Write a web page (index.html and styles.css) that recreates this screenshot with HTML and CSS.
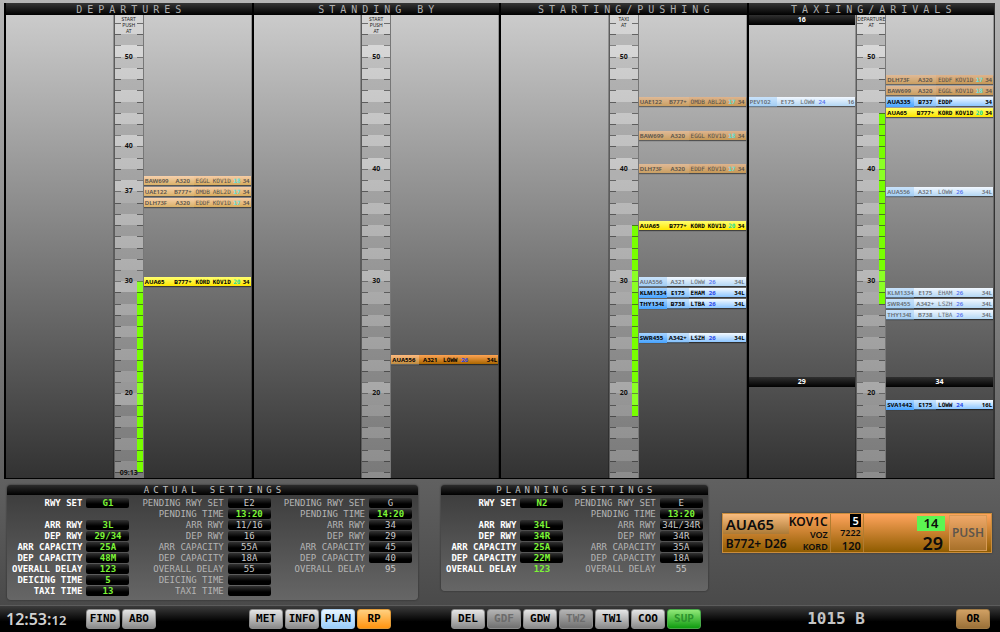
FILE: index.html
```html
<!DOCTYPE html>
<html lang="en">
<head>
<meta charset="utf-8">
<title>Departure Manager</title>
<link rel="stylesheet" href="styles.css">
</head>
<body>
<main class="board" id="board"></main>

<div class="lower">
  <section class="settings">
    <h2 class="settings-title">ACTUAL SETTINGS</h2>
    <div class="settings-cols" id="actual"></div>
  </section>
  <section class="settings planning">
    <h2 class="settings-title">PLANNING SETTINGS</h2>
    <div class="settings-cols" id="planning"></div>
  </section>
  <article class="card">
    <div class="card-id">
      <div class="card-call">AUA65</div>
      <div class="card-type"><span>B772+</span><span>D26</span></div>
    </div>
    <div class="card-route"><b>KOV1C</b><span>VOZ</span><span>KORD</span></div>
    <div class="card-codes"><b class="flag">5</b><span>7222</span><b>120</b></div>
    <div class="card-slot"><span class="slot-min">14</span><span class="slot-rwy">29</span></div>
    <button class="push" type="button">PUSH</button>
  </article>
</div>

<footer class="bar">
  <time class="clock">12:53:<small>12</small></time>
  <div class="group group-find">
    <button class="key" type="button">FIND</button>
    <button class="key" type="button">ABO</button>
  </div>
  <div class="group group-view">
    <button class="key" type="button">MET</button>
    <button class="key" type="button">INFO</button>
    <button class="key key-blue" type="button">PLAN</button>
    <button class="key key-amber" type="button">RP</button>
  </div>
  <div class="group group-role">
    <button class="key" type="button">DEL</button>
    <button class="key key-off" type="button">GDF</button>
    <button class="key" type="button">GDW</button>
    <button class="key key-off" type="button">TW2</button>
    <button class="key" type="button">TW1</button>
    <button class="key" type="button">COO</button>
    <button class="key key-green" type="button">SUP</button>
  </div>
  <div class="qnh">1015 B</div>
  <button class="key key-brown" type="button">OR</button>
</footer>
<script src="app.js"></script>
</body>
</html>
```

FILE: styles.css
```css
* { box-sizing: border-box; }

:root {
  --mono: "DejaVu Sans Mono", "Liberation Mono", monospace;
  --sans: "Noto Sans", "Open Sans", sans-serif;
}

body {
  margin: 0;
  min-height: 100vh;
  display: flex;
  flex-direction: column;
  font-family: var(--mono);
  background: linear-gradient(#b6b6b6, #454545);
}

/* Board */
.board {
  flex: 1;
  display: grid;
  grid-template-columns: repeat(4, minmax(0, 1fr));
  margin: 3px 5px 0 4px;
  border-right: 1px solid #333;
  border-bottom: 1px solid #000;
}

.stage {
  display: flex;
  flex-direction: column;
  border-left: 2px solid #000;
}

.stage-title {
  margin: 0;
  height: 12px;
  padding-left: 5px;
  background: linear-gradient(#363636, #000);
  color: #b0b0b0;
  font-size: 10px;
  font-weight: 400;
  line-height: 13px;
  letter-spacing: 5px;
  text-align: center;
  white-space: nowrap;
  overflow: hidden;
}

.stage-body {
  flex: 1;
  display: grid;
  grid-template-columns: minmax(0, 1fr) 30px minmax(0, 1fr);
  background: linear-gradient(#cbcbcb, #323232);
}

.lane,
.axis {
  display: grid;
  grid-template-rows: 8px repeat(40, minmax(0, 1fr)) 6px;
  grid-template-columns: minmax(0, 1fr);
}

.lane { border-right: 1px solid rgba(0, 0, 0, 0.25); }

.axis {
  position: relative;
  border-left: 1px solid #5c5c5c;
  border-right: 1px solid #777;
  background: linear-gradient(#d6d6d6, #8c8c8c);
}

.minute {
  grid-column: 1;
  display: flex;
  justify-content: space-between;
}

.minute.dark { background: rgba(0, 0, 0, 0.13); }

.minute::before,
.minute::after {
  content: "";
  width: 6px;
  height: 1px;
  background: rgba(40, 40, 40, 0.6);
  z-index: 2;
}

.mark {
  grid-column: 1;
  display: flex;
  align-items: center;
  justify-content: center;
  background: rgba(255, 255, 255, 0.14);
  color: #111;
  font: 700 7px/10px var(--sans);
  z-index: 3;
}

.mark.last { align-items: flex-end; background: none; }

.window {
  grid-column: 1;
  justify-self: end;
  width: 6px;
  background: #78ff00;
  z-index: 1;
}

.axis-caption {
  position: absolute;
  inset: 1px 0 auto;
  color: #222;
  font: 5px/6px var(--sans);
  text-align: center;
  white-space: pre-line;
  z-index: 3;
}

/* Flight strips */
.strip {
  grid-column: 1;
  align-self: center;
  display: grid;
  grid-template-columns: 28px 22px 18px 20px 10px minmax(0, 1fr);
  height: 9px;
  color: #000;
  font: 500 6px/10px var(--mono);
  white-space: nowrap;
  box-shadow: 0 1px 1px rgba(0, 0, 0, 0.5);
}

.strip span { text-align: center; }
.strip .call,
.strip .type,
.strip .rwy { font-family: var(--sans); }
.strip .call { padding-left: 1px; text-align: left; }
.strip .rwy { padding-right: 1px; display: flex; justify-content: flex-end; }
.strip .wake { color: #5fe0e0; }

.strip.yellow { background: linear-gradient(#ffff70, #ffe600); font-weight: 700; }
.strip.yellow .wake { color: #19dca0; }
.strip.orange { background: linear-gradient(#ffa454, #a96600); font-weight: 700; }
.strip.orange .call { background: rgba(255, 255, 255, 0.25); }
.strip.tan { background: linear-gradient(#f7cda6, #d7ab5c); color: #55504a; font-weight: 600; }
.strip.tan .call,
.strip.tan .type { background: rgba(255, 255, 255, 0.08); }
.strip.dim { background: linear-gradient(#deb48e, #c69855); }
.strip.tan .dest,
.strip.tan .sid,
.strip.pale .dest { font-weight: 400; }

.strip.blue { background: linear-gradient(#f4faff, #8dc6ff); font-weight: 700; }
.strip.pale { background: linear-gradient(#f2f8ff, #b4d7f4); color: #64696e; font-weight: 600; }
.strip.blue .call { background: linear-gradient(#a8d4ff, #46a3ff); }
.strip.blue .type { background: rgba(120, 185, 250, 0.35); }
.strip.pale .call { background: rgba(140, 195, 245, 0.4); }
.strip.blue .sid,
.strip.pale .sid,
.strip.orange .sid { padding-left: 2px; color: #2846e8; text-align: left; font-family: var(--sans); }
.strip.pale .sid { color: #5874f0; }

.runway {
  grid-column: 1;
  align-self: center;
  height: 10px;
  background: linear-gradient(#303030, #000);
  color: #fff;
  font: 700 7px/10px var(--sans);
  text-align: center;
}

.runway.first { align-self: start; }

/* Settings */
.lower {
  display: flex;
  align-items: flex-start;
  padding: 6px 8px 5px 7px;
}

.settings {
  border-radius: 4px;
  background: linear-gradient(#3a3a3a, #666);
  box-shadow: 0 0 2px #222;
  overflow: hidden;
}

.settings-title {
  margin: 0;
  height: 10px;
  padding-left: 4px;
  background: linear-gradient(#2c2c2c, #000);
  color: #c0c0c0;
  font-size: 9px;
  font-weight: 400;
  line-height: 10px;
  letter-spacing: 4px;
  text-align: center;
}

.settings-cols {
  display: flex;
  gap: 13px;
  padding: 3px 6px 3px 5px;
}

.planning { margin-left: 23px; }
.planning .settings-cols { gap: 11px; padding: 3px 5px 16px; }

.settings-col {
  display: grid;
  grid-template-columns: auto 43px;
  grid-auto-rows: 11px;
  align-content: start;
  column-gap: 4px;
  color: #b4b4b4;
  font-size: 9px;
  line-height: 11px;
  text-align: right;
  white-space: nowrap;
}

.settings-col label { grid-column: 1; }

.settings-col input,
.settings-col output {
  grid-column: 2;
  width: 43px;
  height: 10px;
  padding: 0;
  border: 0;
  border-radius: 2px;
  color: #cacaca;
  font: 9px/10px var(--mono);
  text-align: center;
}

.settings-col input { background: linear-gradient(#333, #000 60%); }

.settings-col.current { color: #fff; font-weight: 700; }
.settings-col.current input,
.settings-col.current output,
.settings-col .time { color: #7cf536; font-weight: 700; }

/* Selected flight */
.card {
  flex: 1;
  display: flex;
  height: 40px;
  margin: 28px 0 0 14px;
  border: 1px solid #c98c3c;
  background: linear-gradient(#ffa45c, #8f5c00);
  box-shadow: 0 0 2px #333;
  color: #0c0c0c;
  font-family: var(--sans);
  font-weight: 600;
}

.card-id { width: 66px; }

.card-call {
  height: 20px;
  padding-left: 3px;
  background: linear-gradient(#f9bd80, #ab7a36);
  font-size: 15px;
  line-height: 21px;
}

.card-type {
  display: flex;
  gap: 3px;
  padding-left: 3px;
  font-size: 12px;
  line-height: 20px;
}

.card-route,
.card-codes {
  display: flex;
  flex-direction: column;
  align-items: flex-end;
  padding-right: 2px;
  border-right: 1px solid #b07c30;
  font-size: 9px;
  line-height: 12px;
}

.card-route { width: 42px; }
.card-codes { width: 33px; }
.card-route b,
.card-codes b { font-size: 11px; font-weight: 600; line-height: 13px; }
.card-route b { font-size: 12px; line-height: 15px; }
.card-codes .flag { padding: 0 2px; background: #000; color: #fff; }

.card-slot {
  display: flex;
  flex-direction: column;
  align-items: flex-end;
  margin-left: auto;
  padding: 2px 4px 0 0;
}

.slot-min {
  width: 28px;
  height: 15px;
  background: #5cf552;
  font-size: 13px;
  line-height: 15px;
  text-align: center;
}

.slot-rwy { padding-right: 2px; font-size: 18px; line-height: 24px; }

.push {
  width: 38px;
  margin: 1px 4px 1px 0;
  padding: 0;
  border: 1px solid #d69a55;
  background: linear-gradient(#efa868, #a8712a);
  color: #5e564c;
  font: 600 12px/16px var(--sans);
}

/* Footer */
.bar {
  display: flex;
  align-items: center;
  height: 27px;
  padding: 0 10px 0 6px;
  border-top: 1px solid #5c5c5c;
  background: linear-gradient(#3c3c3c, #000 60%);
}

.clock { width: 80px; color: #d0d0d0; font: 600 16px/20px var(--sans); }
.clock small { font-size: 13px; }

.group { display: flex; gap: 2px; }
.group-view { margin-left: 93px; }
.group-role { margin-left: 60px; }

.key {
  width: 34px;
  height: 20px;
  padding: 0;
  border: 1px solid #8c8c8c;
  border-radius: 3px;
  background: linear-gradient(#e6e6e6, #8a8a8a);
  color: #000;
  font: 700 11px/16px var(--mono);
}

.key-off { background: linear-gradient(#b4b4b4, #707070); color: #6c6c6c; }
.key-blue { border-color: #a8cbea; background: linear-gradient(#e8f6ff, #98cdfb); }
.key-amber { border-color: #e09a38; background: linear-gradient(#ffd080, #ff9410); }
.key-green { border-color: #48a848; background: linear-gradient(#90e878, #109c10); color: #2c942c; }
.key-brown { border-color: #a07a44; background: linear-gradient(#d0a064, #9a7038); }

.qnh {
  margin: 0 91px 0 auto;
  color: #c4c4c4;
  font-size: 16px;
  font-weight: 700;
  line-height: 20px;
  white-space: pre;
}
```

FILE: app.js
```js
// Timeline slots count down the board from its first tick, one per minute.
// Strip: [slot, style, callsign, type, destination, SID, wake gap, runway]
const stages = [
  {
    title: "DEPARTURES",
    caption: "START\nPUSH\nAT",
    marks: [[3, "50"], [11, "40"], [15, "37"], [23, "30"], [33, "20"], [40, "09:13"]],
    flip: 16,
    window: [23, 40],
    left: [],
    right: [
      [14, "tan", "BAW699", "A320", "EGGL", "KOV1D", "18", "34"],
      [15, "tan", "UAE122", "B777+", "OMDB", "ABL2D", "17", "34"],
      [16, "tan", "DLH73F", "A320", "EDDF", "KOV1D", "17", "34"],
      [23, "yellow", "AUA65", "B777+", "KORD", "KOV1D", "20", "34"]
    ]
  },
  {
    title: "STANDING BY",
    caption: "START\nPUSH\nAT",
    marks: [[3, "50"], [13, "40"], [23, "30"], [33, "20"]],
    left: [],
    right: [[30, "orange", "AUA556", "A321", "LOWW", "26", "", "34L"]]
  },
  {
    title: "STARTING/PUSHING",
    caption: "TAXI\nAT",
    marks: [[3, "50"], [13, "40"], [23, "30"], [33, "20"]],
    window: [18, 35],
    left: [],
    right: [
      [7, "tan dim", "UAE122", "B777+", "OMDB", "ABL2D", "17", "34"],
      [10, "tan dim", "BAW699", "A320", "EGGL", "KOV1D", "18", "34"],
      [13, "tan dim", "DLH73F", "A320", "EDDF", "KOV1D", "17", "34"],
      [18, "yellow", "AUA65", "B777+", "KORD", "KOV1D", "20", "34"],
      [23, "pale", "AUA556", "A321", "LOWW", "26", "", "34L"],
      [24, "blue", "KLM1334", "E175", "EHAM", "26", "", "34L"],
      [25, "blue", "THY134I", "B738", "LTBA", "26", "", "34L"],
      [28, "blue", "SWR455", "A342+", "LSZH", "26", "", "34L"]
    ]
  },
  {
    title: "TAXIING/ARIVALS",
    caption: "DEPARTURE\nAT",
    marks: [[3, "50"], [13, "40"], [23, "30"], [33, "20"]],
    window: [8, 25],
    left: [
      [0, "runway", "16"],
      [7, "pale", "PEV102", "E175", "LOWW", "24", "", "16"],
      [32, "runway", "29"]
    ],
    right: [
      [5, "tan dim", "DLH73F", "A320", "EDDF", "KOV1D", "17", "34"],
      [6, "tan dim", "BAW699", "A320", "EGGL", "KOV1D", "18", "34"],
      [7, "blue", "AUA335", "B737", "EDDP", "", "", "34"],
      [8, "yellow", "AUA65", "B777+", "KORD", "KOV1D", "20", "34"],
      [15, "pale", "AUA556", "A321", "LOWW", "26", "", "34L"],
      [24, "pale", "KLM1334", "E175", "EHAM", "26", "", "34L"],
      [25, "pale", "SWR455", "A342+", "LSZH", "26", "", "34L"],
      [26, "pale", "THY134I", "B738", "LTBA", "26", "", "34L"],
      [32, "runway", "34"],
      [34, "blue", "SVA1442", "E175", "LOWW", "24", "", "16L"]
    ]
  }
];

const rows = (from, to) => `style="grid-row:${from}/${to}"`;

function strip([slot, style, ...text]) {
  if (style === "runway") {
    const first = slot ? "" : " first";
    return `<div class="runway${first}" ${rows(slot + 1, slot + 3)}>${text[0]}</div>`;
  }
  const names = ["call", "type", "dest", "sid", "wake", "rwy"];
  const cells = text.map((t, i) => `<span class="${names[i]}">${t}</span>`).join("");
  return `<article class="strip ${style}" ${rows(slot + 1, slot + 3)}>${cells}</article>`;
}

function axis(stage) {
  let html = `<div class="axis-caption">${stage.caption}</div>`;
  if (stage.window) {
    html += `<div class="window" ${rows(stage.window[0] + 2, stage.window[1] + 2)}></div>`;
  }
  for (let k = 0; k <= 40; k++) {
    const odd = k % 2 === 1;
    const dark = stage.flip && k >= stage.flip ? !odd : odd;
    html += `<div class="minute${dark ? " dark" : ""}" ${rows(k + 2, k + 3)}></div>`;
  }
  for (const [k, label] of stage.marks) {
    html += `<div class="mark${k === 40 ? " last" : ""}" ${rows(k + 1, k + 3)}>${label}</div>`;
  }
  return html;
}

document.getElementById("board").innerHTML = stages.map(s => `
  <section class="stage">
    <h2 class="stage-title">${s.title}</h2>
    <div class="stage-body">
      <div class="lane">${s.left.map(strip).join("")}</div>
      <div class="axis">${axis(s)}</div>
      <div class="lane">${s.right.map(strip).join("")}</div>
    </div>
  </section>`).join("");

const names = ["RWY SET", "PENDING TIME", "ARR RWY", "DEP RWY", "ARR CAPACITY",
  "DEP CAPACITY", "OVERALL DELAY", "DEICING TIME", "TAXI TIME"];

// A value starting with "=" is a computed result shown without a field.
const settings = {
  actual: [
    ["G1", null, "3L", "29/34", "25A", "48M", "123", "5", "13"],
    ["E2", "13:20", "11/16", "16", "55A", "18A", "55", "", ""],
    ["G", "14:20", "34", "29", "45", "40", "=95"]
  ],
  planning: [
    ["N2", null, "34L", "34R", "25A", "22M", "=123"],
    ["E", "13:20", "34L/34R", "34R", "35A", "18A", "=55"]
  ]
};

for (const [id, cols] of Object.entries(settings)) {
  document.getElementById(id).innerHTML = cols.map((values, c) => {
    const cells = values.map((v, r) => {
      if (v === null) return "";
      const key = `${id}-${c}-${r}`;
      const name = (c && r === 0 ? "PENDING " : "") + names[r];
      const row = `style="grid-row:${r + 1}"`;
      const field = v.startsWith("=")
        ? `<output id="${key}" ${row}>${v.slice(1)}</output>`
        : `<input id="${key}" type="text" value="${v}" ${r === 1 ? 'class="time"' : ""} ${row}>`;
      return `<label for="${key}" ${row}>${name}</label>${field}`;
    }).join("");
    return `<div class="settings-col${c ? "" : " current"}">${cells}</div>`;
  }).join("");
}
```
